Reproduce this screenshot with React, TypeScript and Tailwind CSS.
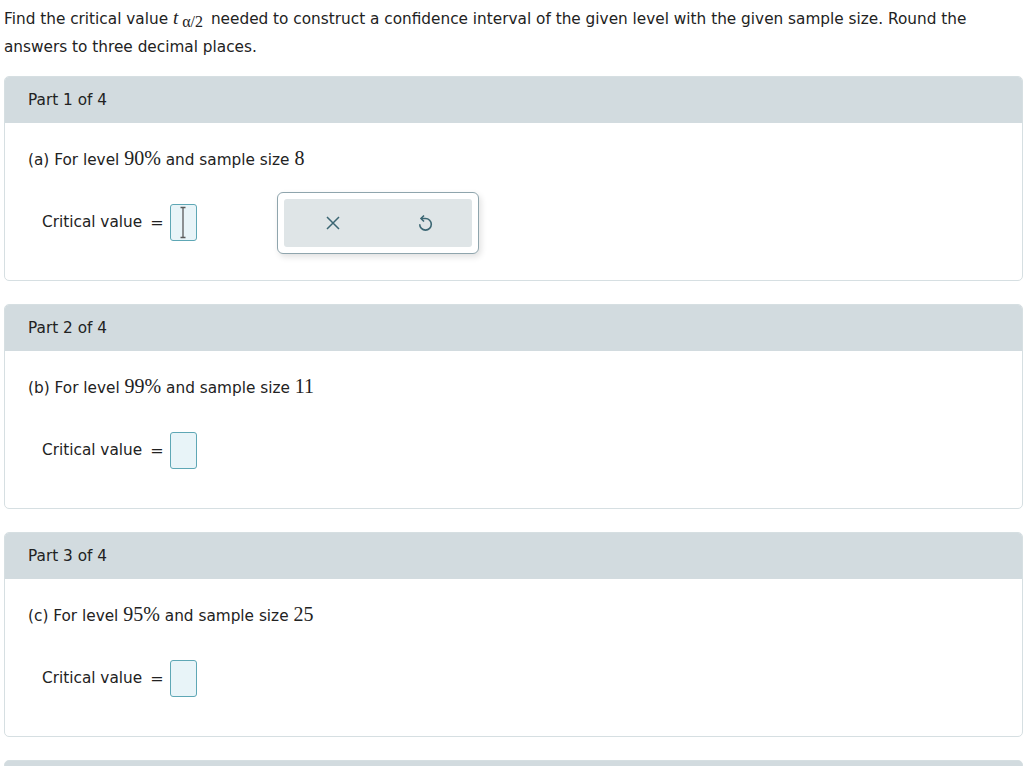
const sans = "font-['DejaVu_Sans','Verdana',sans-serif]";
const serif = "font-['Liberation_Serif','Times_New_Roman',serif]";

function AnswerBox({ active }: { active?: boolean }) {
  return (
    <span className="relative inline-flex h-[37px] w-[27px] shrink-0 items-center justify-center rounded-[3px] border border-[#5ea7b5] bg-[#e8f4f8]">
      {active && (
        <svg width="8" height="33" viewBox="0 0 8 33" className="text-[#5a5a5a]">
          <path d="M1.5 1.5h5M1.5 31.5h5M4 1.5v30" stroke="currentColor" strokeWidth="1.3" fill="none" />
        </svg>
      )}
    </span>
  );
}

function Tools() {
  return (
    <div className="ml-[80px] shrink-0 rounded-[6px] border border-[#8fa5ad] bg-white p-[6px] shadow-[2px_3px_6px_rgba(0,0,0,0.12)]">
      <div className="flex h-[48px] w-[188px] items-center justify-around rounded-[3px] bg-[#dfe5e7] text-[#3b6673]">
        <svg width="16" height="16" viewBox="0 0 16 16" className="ml-[4px]">
          <path d="M2 2l12 12M14 2L2 14" stroke="currentColor" strokeWidth="1.5" fill="none" />
        </svg>
        <svg width="18" height="20" viewBox="0 0 18 20">
          <path d="M5 5.5H9.5A5.8 5.8 0 1 1 3.7 11.3" stroke="currentColor" strokeWidth="1.6" fill="none" />
          <path d="M8 2.5L5 5.5l3 3" stroke="currentColor" strokeWidth="1.6" fill="none" />
        </svg>
      </div>
    </div>
  );
}

function Part({ n, letter, level, size, active }: { n: number; letter: string; level: string; size: string; active?: boolean }) {
  return (
    <section className="ml-[4px] mr-px overflow-hidden rounded-[5px] border border-[#d6dfe2] bg-white">
      <div className="flex h-[46px] items-center bg-[#d2dbdf] pl-[23px] text-[15.3px] text-[#222]">
        Part {n} of 4
      </div>
      <div className="px-[23px] pt-[23px] pb-[39px] text-[15.3px] text-[#222]">
        <div className="h-[24px] leading-[24px]">
          ({letter}) For level <span className={`${serif} text-[20px]`}>{level}%</span> and sample size{" "}
          <span className={`${serif} text-[20px]`}>{size}</span>
        </div>
        <div className="mt-[34px] flex h-[37px] items-center pl-[14px]">
          <span>Critical value</span>
          <span className="ml-[8px] mr-[6px] text-[16px]">=</span>
          <AnswerBox active={active} />
          {active && <Tools />}
        </div>
      </div>
    </section>
  );
}

export default function App() {
  return (
    <div className={`${sans} min-h-[766px] overflow-hidden bg-white`}>
      <p className="pl-[4px] pr-[40px] pt-[4px] text-[15.3px] leading-[28px] text-[#222]">
        Find the critical value{" "}
        <span className={`${serif} italic text-[19px]`}>t</span>
        <sub className={`${serif} relative top-[3px] ml-[4px] mr-[3px] text-[16px] leading-none`}>α/2</sub>{" "}
        needed to construct a confidence interval of the given level with the given sample size. Round the answers to three
        decimal places.
      </p>
      <div className="mt-[15px] flex flex-col gap-[23px]">
        <Part n={1} letter="a" level="90" size="8" active />
        <Part n={2} letter="b" level="99" size="11" />
        <Part n={3} letter="c" level="95" size="25" />
        <section className="ml-[4px] mr-px h-[40px] overflow-hidden rounded-[5px] border border-[#d6dfe2] bg-[#d2dbdf]" />
      </div>
    </div>
  );
}
